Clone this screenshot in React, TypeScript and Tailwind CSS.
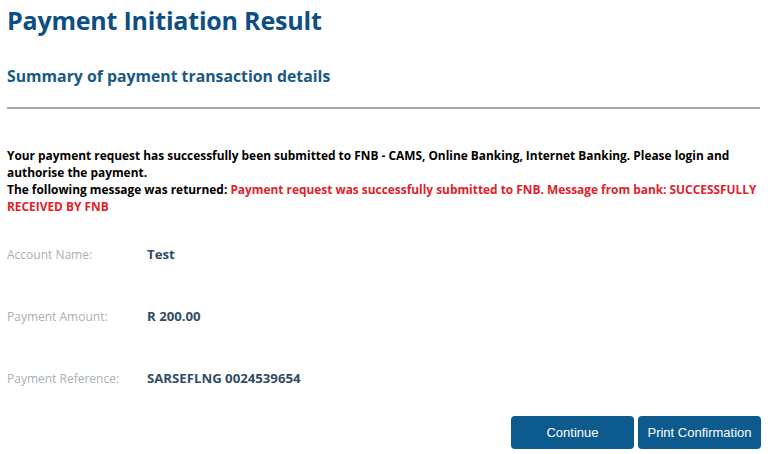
import React from "react";

export default function App() {
  const rows = [
    { label: "Account Name:", value: "Test" },
    { label: "Payment Amount:", value: "R 200.00" },
    { label: "Payment Reference:", value: "SARSEFLNG 0024539654" },
  ];
  return (
    <div className="w-[768px] h-[454px] bg-white overflow-hidden px-[7px] font-['Open_Sans',sans-serif]">
      <h1 className="text-[25px] leading-[40px] font-bold text-[#0d4f82] tracking-[-0.2px]">
        Payment Initiation Result
      </h1>
      <h2 className="mt-[24px] text-[15.8px] leading-[24px] font-bold text-[#185a85]">
        Summary of payment transaction details
      </h2>
      <div className="mt-[19px] mr-[1px] h-[2px] bg-[#a6a6a6]" />
      <div className="mt-[38px] text-[11.9px] leading-[17px] font-bold text-black">
        <p>
          Your payment request has successfully been submitted to FNB - CAMS, Online Banking, Internet Banking. Please login and authorise the payment.
        </p>
        <p>
          The following message was returned:{" "}
          <span className="text-[#e0222b]">
            Payment request was successfully submitted to FNB. Message from bank: SUCCESSFULLY RECEIVED BY FNB
          </span>
        </p>
      </div>
      <div className="mt-[31px] flex flex-col gap-[44px]">
        {rows.map((r) => (
          <div key={r.label} className="flex items-center h-[18px]">
            <div className="w-[140px] text-[12px] text-[#a8b0b8]">{r.label}</div>
            <div className="text-[13.2px] font-bold text-[#2f4d66]">{r.value}</div>
          </div>
        ))}
      </div>
      <div className="mt-[28px] flex justify-end gap-[4px] font-['Liberation_Sans',Arial,sans-serif]">
        <button className="w-[123px] h-[33px] rounded-[4px] bg-[#0c5a8e] text-white text-[13px]">
          Continue
        </button>
        <button className="w-[123px] h-[33px] rounded-[4px] bg-[#0c5a8e] text-white text-[13px]">
          Print Confirmation
        </button>
      </div>
    </div>
  );
}
